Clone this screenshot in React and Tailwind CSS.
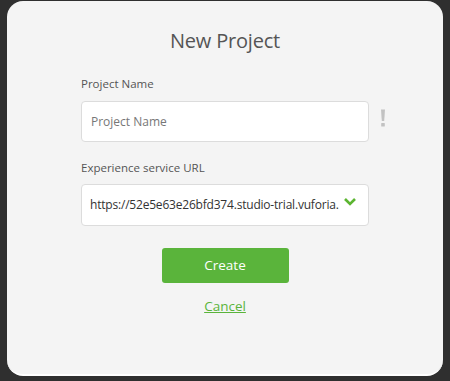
import React from "react";

export default function App() {
  return (
    <div className="w-[450px] h-[381px] bg-[#2f2f2f] overflow-hidden" style={{ fontFamily: '"Open Sans", "Noto Sans", sans-serif' }}>
      <div className="ml-[7px] mt-[1px] w-[436px] h-[375px] bg-[#f4f4f4] rounded-[16px] border-b-2 border-[#ffffff] flex flex-col items-center">
        <h1 className="mt-[26px] text-[20px] leading-[28px] tracking-[-0.2px] text-[#555555]">New Project</h1>
        <div className="w-[288px] mt-[20px]">
          <label className="block text-[11.5px] leading-[18px] text-[#555555]">Project Name</label>
          <div className="relative mt-[8px]">
            <input
              className="w-[288px] h-[41px] bg-white border border-[#dcdcdc] rounded-[4px] px-[9px] text-[12px] text-[#333] placeholder:text-[#777777] outline-none"
              placeholder="Project Name"
            />
            <svg width="8" height="20" viewBox="0 0 8 20" className="absolute left-[298px] top-[7px]">
              <path d="M2 1.5 h4 l-0.8 11.5 h-2.4 z" fill="#c2c2c2" />
              <rect x="2.2" y="15" width="3.6" height="3.6" rx="0.6" fill="#c2c2c2" />
            </svg>
          </div>
          <label className="block mt-[17px] text-[11.5px] leading-[18px] text-[#555555]">Experience service URL</label>
          <div className="mt-[7px] w-[288px] h-[42px] bg-white border border-[#dcdcdc] rounded-[4px] pl-[8px] pr-[11px] flex items-center justify-between">
            <span className="text-[12px] tracking-[-0.2px] text-[#333333] whitespace-nowrap overflow-hidden">https://52e5e63e26bfd374.studio-trial.vuforia.</span>
            <svg width="14" height="10" viewBox="0 0 14 10" className="shrink-0 mb-[6px] ml-[4px]">
              <path d="M2 2 L7 7 L12 2" fill="none" stroke="#5cb531" strokeWidth="2.6" />
            </svg>
          </div>
        </div>
        <button className="mt-[22px] w-[127px] h-[35px] bg-[#5ab43b] rounded-[3px] text-white text-[13.5px]">Create</button>
        <a className="mt-[13px] text-[13.5px] text-[#5ab43b] underline" href="#">Cancel</a>
      </div>
    </div>
  );
}
